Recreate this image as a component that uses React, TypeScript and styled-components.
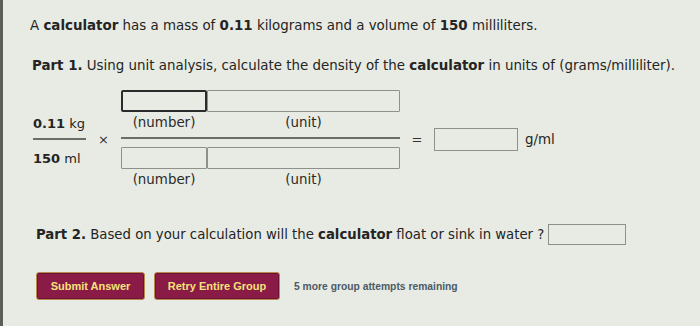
import * as React from "react";
import styled, { createGlobalStyle } from "styled-components";

const GlobalStyle = createGlobalStyle`
  html, body {
    margin: 0;
    padding: 0;
    background: #e7ebe3;
  }
  body {
    font-family: "DejaVu Sans", Verdana, sans-serif;
    color: #242424;
  }
`;

const Page = styled.div`
  width: 700px;
  height: 326px;
  box-sizing: border-box;
  padding: 17px 0 0 27px;
  border-left: 3px solid #5a5e58;
  background: #e7ebe3;
  overflow: hidden;
`;

const Line = styled.p<{ $top?: number; $left?: number; $size?: number }>`
  margin: ${(p) => p.$top ?? 0}px 0 0 ${(p) => p.$left ?? 0}px;
  font-size: ${(p) => p.$size ?? 13.4}px;
  line-height: 18px;
  white-space: nowrap;
  b {
    font-weight: bold;
  }
`;

const Equation = styled.div`
  display: flex;
  align-items: center;
  margin: 15px 0 0 3px;
`;

const Given = styled.div`
  display: flex;
  flex-direction: column;
  width: 53px;
  font-size: 13px;
  line-height: 16px;
  padding-top: 4px;
  white-space: nowrap;
`;

const Rule = styled.div<{ $gapTop: number; $gapBottom: number }>`
  height: 2px;
  background: #6a6e68;
  margin: ${(p) => p.$gapTop}px 0 ${(p) => p.$gapBottom}px;
`;

const Operator = styled.span<{ $width: number }>`
  width: ${(p) => p.$width}px;
  text-align: center;
  font-size: 13px;
  color: #333;
`;

const FractionGrid = styled.div`
  display: grid;
  grid-template-columns: 86px 193px;
`;

const Box = styled.div<{ $focused?: boolean }>`
  height: 22px;
  box-sizing: border-box;
  border-style: solid;
  border-color: ${(p) => (p.$focused ? "#2b2b2b" : "#8d908b")};
  border-width: ${(p) => (p.$focused ? "2px" : "1px")};
  border-radius: ${(p) => (p.$focused ? "2px" : "1px")};
  background: transparent;
`;

const Label = styled.div`
  text-align: center;
  font-size: 13.4px;
  line-height: 16px;
  margin-top: 3px;
  color: #2a2a2a;
`;

const FullRule = styled(Rule)`
  grid-column: 1 / span 2;
`;

const ResultBox = styled.div`
  width: 84px;
  height: 23px;
  box-sizing: border-box;
  border: 1px solid #8d908b;
`;

const Unit = styled.span`
  font-size: 13.4px;
  margin-left: 7px;
`;

const PartTwo = styled.div`
  display: flex;
  align-items: center;
  margin: 36px 0 0 6px;
`;

const AnswerBox = styled.div`
  width: 78px;
  height: 21px;
  box-sizing: border-box;
  border: 1px solid #8d908b;
  margin-left: 4px;
`;

const Actions = styled.div`
  display: flex;
  align-items: center;
  gap: 9px;
  margin: 27px 0 0 6px;
`;

const Button = styled.button<{ $width: number }>`
  width: ${(p) => p.$width}px;
  height: 28px;
  padding: 0;
  border: 1px solid #b58a4a;
  border-radius: 3px;
  background: #8a1b47;
  color: #f4e27a;
  font-family: "Liberation Sans", Arial, sans-serif;
  font-weight: bold;
  font-size: 11px;
  box-shadow: inset 0 0 0 1px #6e1237;
`;

const Status = styled.span`
  margin-left: 5px;
  font-family: "Liberation Sans", Arial, sans-serif;
  font-weight: bold;
  font-size: 10.3px;
  color: #4d5a66;
`;

export default function App() {
  return (
    <>
      <GlobalStyle />
      <Page>
        <Line>
          A <b>calculator</b> has a mass of <b>0.11</b> kilograms and a volume of{" "}
          <b>150</b> milliliters.
        </Line>
        <Line $top={22} $left={2}>
          <b>Part 1.</b> Using unit analysis, calculate the density of the{" "}
          <b>calculator</b> in units of (grams/milliliter).
        </Line>

        <Equation>
          <Given>
            <span>
              <b>0.11</b> kg
            </span>
            <Rule $gapTop={6} $gapBottom={11} />
            <span>
              <b>150</b> ml
            </span>
          </Given>
          <Operator $width={35}>×</Operator>
          <FractionGrid>
            <Box $focused />
            <Box />
            <Label>(number)</Label>
            <Label>(unit)</Label>
            <FullRule $gapTop={6} $gapBottom={8} />
            <Box />
            <Box />
            <Label>(number)</Label>
            <Label>(unit)</Label>
          </FractionGrid>
          <Operator $width={34}>=</Operator>
          <ResultBox />
          <Unit>g/ml</Unit>
        </Equation>

        <PartTwo>
          <Line $size={13.25}>
            <b>Part 2.</b> Based on your calculation will the <b>calculator</b> float or
            sink in water ?
          </Line>
          <AnswerBox />
        </PartTwo>

        <Actions>
          <Button $width={109}>Submit Answer</Button>
          <Button $width={126}>Retry Entire Group</Button>
          <Status>5 more group attempts remaining</Status>
        </Actions>
      </Page>
    </>
  );
}
